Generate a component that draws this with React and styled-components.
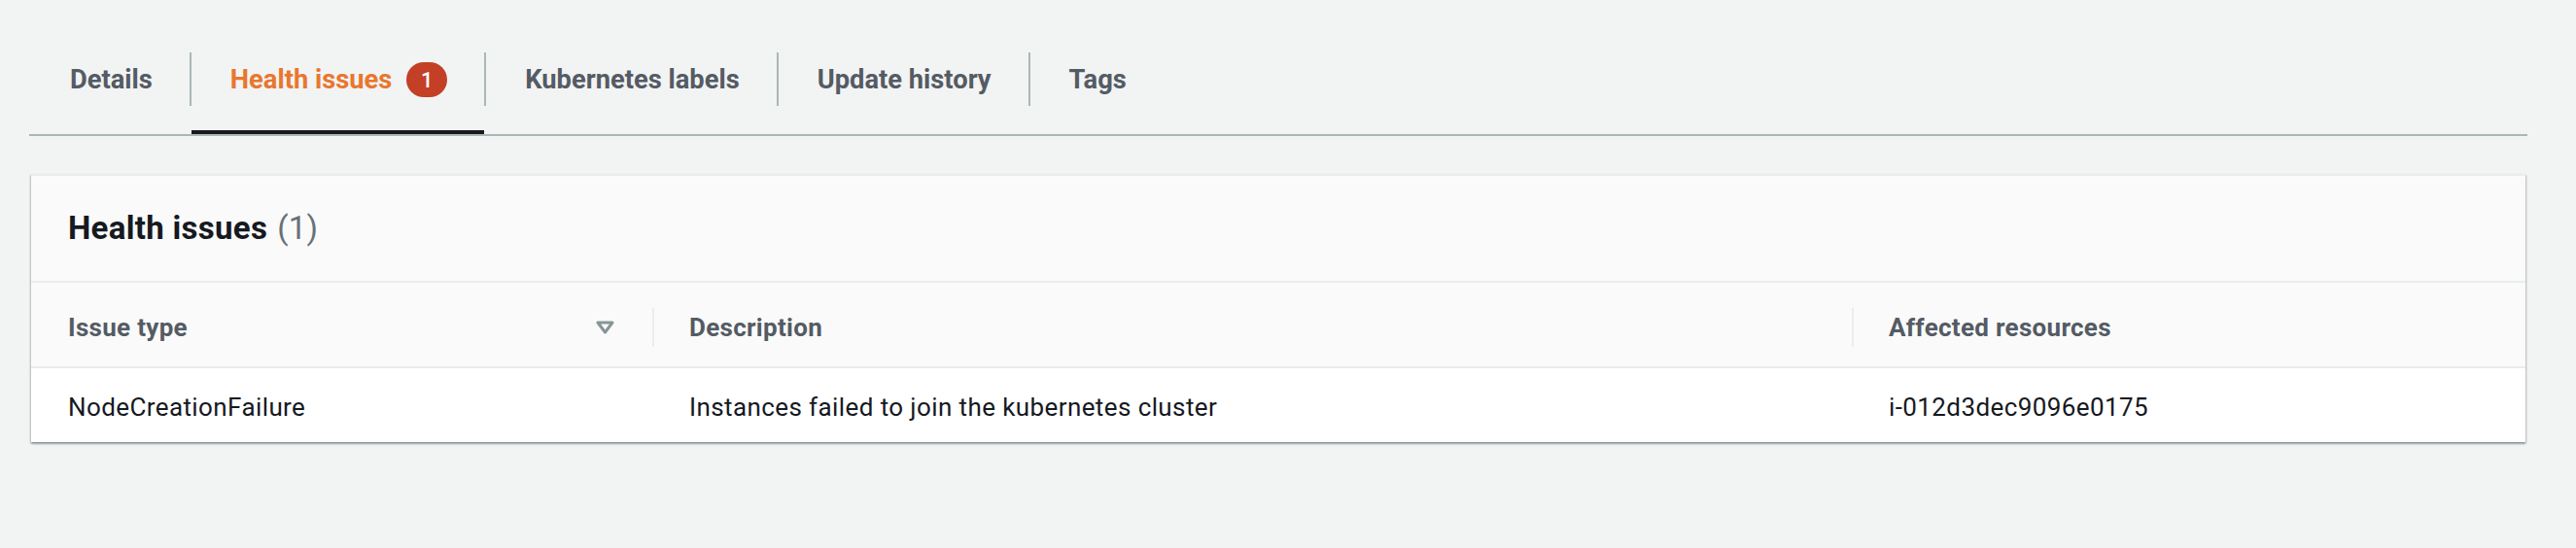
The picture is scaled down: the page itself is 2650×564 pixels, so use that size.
import React from "react";
import styled, { createGlobalStyle } from "styled-components";

const GlobalStyle = createGlobalStyle`
  html, body {
    margin: 0;
    padding: 0;
    background: #f2f3f3;
  }
  body {
    font-family: Roboto, "Liberation Sans", Arial, sans-serif;
    -webkit-font-smoothing: antialiased;
  }
  * { box-sizing: border-box; }
`;

const Page = styled.div`
  width: 2650px;
  height: 564px;
  padding: 25px 50px 0 30px;
  background: #f2f3f3;
`;

const TabList = styled.div`
  display: flex;
  align-items: stretch;
  height: 115px;
  padding-left: 2px;
  border-bottom: 2px solid #aab7b8;
`;

const Tab = styled.div`
  display: flex;
  align-items: center;
  padding: 5px 38px 0 40px;
  border-bottom: 4px solid ${(p) => (p.$active ? "#16191f" : "transparent")};
  font-size: 27.3px;
  font-weight: 700;
  color: ${(p) => (p.$active ? "#e8772e" : "#545b64")};
  white-space: nowrap;
  cursor: pointer;
`;

const TabDivider = styled.span`
  flex: none;
  width: 2px;
  height: 55px;
  margin-top: 29px;
  background: #aab7b8;
`;

const Badge = styled.span`
  display: inline-flex;
  align-items: center;
  justify-content: center;
  width: 42px;
  height: 36px;
  margin-left: 15px;
  border-radius: 18px;
  background: #c33f26;
  color: #ffffff;
  font-size: 22px;
  font-weight: 500;
`;

const Card = styled.div`
  margin: 39px 2px 0 2px;
  background: #ffffff;
  border-top: 2px solid #eaeded;
  box-shadow: 0 2px 2px 0 rgba(0, 28, 36, 0.3), 1px 1px 2px 0 rgba(0, 28, 36, 0.15),
    -1px 1px 2px 0 rgba(0, 28, 36, 0.15);
`;

const CardHeader = styled.div`
  display: flex;
  align-items: center;
  height: 110px;
  padding: 0 36px 0 38px;
  background: #fafafa;
  border-bottom: 2px solid #eaeded;
`;

const Title = styled.h2`
  margin: 0;
  font-size: 33px;
  font-weight: 700;
  letter-spacing: 0.3px;
  color: #16191f;
  line-height: 40px;
`;

const Count = styled.span`
  margin-left: 10px;
  font-weight: 400;
  color: #687078;
`;

const Row = styled.div`
  display: grid;
  grid-template-columns: 639px 1234px 1fr;
  height: ${(p) => (p.$head ? "88px" : "76px")};
  padding-top: ${(p) => (p.$head ? "5px" : "3px")};
  background: ${(p) => (p.$head ? "#fafafa" : "#ffffff")};
  border-bottom: ${(p) => (p.$head ? "2px solid #eaeded" : "none")};
`;

const HeadCell = styled.div`
  display: flex;
  align-items: center;
  padding-right: 39px;
  padding-left: ${(p) => (p.$first ? "38px" : "0")};
  font-size: 26px;
  font-weight: 700;
  letter-spacing: 0.3px;
  color: #545b64;
  white-space: nowrap;
`;

const ColDivider = styled.span`
  flex: none;
  width: 2px;
  height: 40px;
  margin-right: 36px;
  background: #eaeded;
`;

const HeadLabel = styled.span`
  flex: 1;
`;

const Cell = styled.div`
  display: flex;
  align-items: center;
  padding-left: 38px;
  font-size: 26px;
  letter-spacing: 0.4px;
  color: #16191f;
  white-space: nowrap;
`;

const SortIcon = () => (
  <svg width="19" height="14" viewBox="0 0 19 14" aria-hidden="true">
    <polygon
      points="2,2 17,2 9.5,12"
      fill="none"
      stroke="#879596"
      strokeWidth="3"
      strokeLinejoin="round"
    />
  </svg>
);

const tabs = ["Details", "Health issues", "Kubernetes labels", "Update history", "Tags"];

export default function App() {
  return (
    <>
      <GlobalStyle />
      <Page>
        <TabList>
          {tabs.map((t, i) => (
            <React.Fragment key={t}>
              {i > 0 && <TabDivider />}
              <Tab $active={t === "Health issues"}>
                {t}
                {t === "Health issues" && <Badge>1</Badge>}
              </Tab>
            </React.Fragment>
          ))}
        </TabList>
        <Card>
          <CardHeader>
            <Title>
              Health issues<Count>(1)</Count>
            </Title>
          </CardHeader>
          <Row $head>
            <HeadCell $first>
              <HeadLabel>Issue type</HeadLabel>
              <SortIcon />
            </HeadCell>
            <HeadCell>
              <ColDivider />
              <HeadLabel>Description</HeadLabel>
            </HeadCell>
            <HeadCell>
              <ColDivider />
              <HeadLabel>Affected resources</HeadLabel>
            </HeadCell>
          </Row>
          <Row>
            <Cell>NodeCreationFailure</Cell>
            <Cell>Instances failed to join the kubernetes cluster</Cell>
            <Cell>i-012d3dec9096e0175</Cell>
          </Row>
        </Card>
      </Page>
    </>
  );
}
